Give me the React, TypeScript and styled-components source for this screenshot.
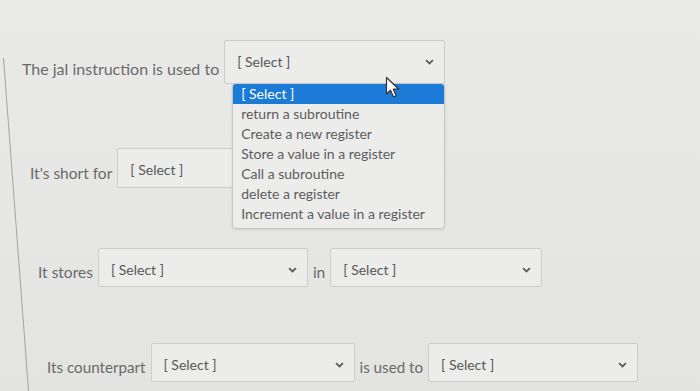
import React from 'react';
import styled, { createGlobalStyle } from 'styled-components';

const GlobalStyle = createGlobalStyle`
    html, body {
        margin: 0;
        padding: 0;
        background: #e7e7e6;
    }
    body {
        font-family: Lato, "Open Sans", sans-serif;
        width: 700px;
        height: 391px;
        overflow: hidden;
    }
`;

const Page = styled.div`
    position: relative;
    width: 700px;
    height: 391px;
    padding-top: 40px;
    box-sizing: border-box;
    background: linear-gradient(180deg, #e9e9e8 0%, #e6e6e5 60%, #e3e3e2 100%);

    &::before {
        content: '';
        position: absolute;
        left: 3px;
        top: 58px;
        bottom: -4px;
        border-left: 1.5px solid #a3a3a3;
        transform: skewX(4.3deg);
        transform-origin: top left;
    }
`;

const Row = styled.div<{ $left: number; $top: number; $height: number }>`
    display: flex;
    align-items: flex-end;
    gap: 5px;
    padding-left: ${p => p.$left}px;
    margin-top: ${p => p.$top}px;
    height: ${p => p.$height}px;
`;

const Label = styled.span<{ $size?: number }>`
    font-size: ${p => p.$size ?? 15.5}px;
    color: #6a6a6a;
    padding-bottom: 6px;
    white-space: nowrap;
`;

const SelectWrap = styled.div<{ $width: number }>`
    position: relative;
    width: ${p => p.$width}px;
    height: 100%;
`;

const SelectBox = styled.div`
    height: 100%;
    box-sizing: border-box;
    border: 1px solid #cdcdcc;
    border-radius: 2px;
    background: #ececeb;
    display: flex;
    align-items: flex-start;
    justify-content: space-between;
    padding: 12px 10px 0 12px;
    font-size: 14px;
    color: #585858;
`;

const Chevron = styled.span`
    display: flex;
    margin-top: 6px;
    color: #5a5a5a;
`;

const Menu = styled.div`
    position: absolute;
    top: calc(100% - 1px);
    left: 8px;
    right: 0;
    z-index: 2;
    background: #ececeb;
    border: 1px solid #c6c6c6;
    border-radius: 4px;
    padding-bottom: 4px;
    overflow: hidden;
    box-shadow: 0 1px 3px rgba(0, 0, 0, 0.1);
`;

const Option = styled.div<{ $active?: boolean }>`
    height: 20px;
    line-height: 20px;
    padding-left: 8px;
    font-size: 14px;
    color: ${p => (p.$active ? '#ffffff' : '#5d5d5d')};
    background: ${p => (p.$active ? '#1c7bd6' : 'transparent')};
    white-space: nowrap;
`;

const Cursor = styled.svg`
    position: absolute;
    left: 385px;
    top: 76px;
    z-index: 3;
`;

const ChevronIcon = () => (
    <svg width="9" height="6" viewBox="0 0 10 7">
        <path d="M1 1.2 L5 5.2 L9 1.2" fill="none" stroke="currentColor" strokeWidth="2" />
    </svg>
);

const options = [
    '[ Select ]',
    'return a subroutine',
    'Create a new register',
    'Store a value in a register',
    'Call a subroutine',
    'delete a register',
    'Increment a value in a register',
];

const Select: React.FC<{ width: number; open?: boolean }> = ({ width, open }) => (
    <SelectWrap $width={width}>
        <SelectBox>
            <span>[ Select ]</span>
            <Chevron>
                <ChevronIcon />
            </Chevron>
        </SelectBox>
        {open && (
            <Menu>
                {options.map((o, i) => (
                    <Option key={o} $active={i === 0}>
                        {o}
                    </Option>
                ))}
            </Menu>
        )}
    </SelectWrap>
);

const App: React.FC = () => {
    return (
        <>
            <GlobalStyle />
            <Page>
                <Row $left={22} $top={0} $height={44}>
                    <Label $size={16}>The jal instruction is used to</Label>
                    <Select width={221} open />
                </Row>
                <Row $left={30} $top={64} $height={40}>
                    <Label>It's short for</Label>
                    <Select width={210} />
                </Row>
                <Row $left={38} $top={60} $height={39}>
                    <Label>It stores</Label>
                    <Select width={210} />
                    <Label>in</Label>
                    <Select width={212} />
                </Row>
                <Row $left={47} $top={56} $height={39}>
                    <Label $size={15.2}>Its counterpart</Label>
                    <Select width={204} />
                    <Label $size={15.2}>is used to</Label>
                    <Select width={210} />
                </Row>
                <Cursor width="18" height="24" viewBox="0 0 18 24">
                    <path
                        d="M1.5 1.5 L1.5 18 L5.5 14.2 L8.5 21 L11.2 19.8 L8.3 13.2 L13.8 13.2 Z"
                        fill="#ffffff"
                        stroke="#333333"
                        strokeWidth="1.2"
                        strokeLinejoin="round"
                    />
                </Cursor>
            </Page>
        </>
    );
};

export default App;
